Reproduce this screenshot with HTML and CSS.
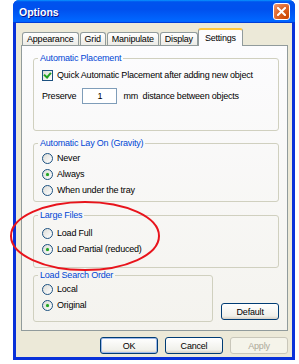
FILE: index.html
```html
<!DOCTYPE html>
<html lang="en">
<head>
    <meta charset="UTF-8">
    <title>Options</title>
    <link rel="stylesheet" href="styles.css">
</head>
<body>
<div class="window">
    <div class="titlebar">
        <span class="title">Options</span>
        <span class="close-button">
            <svg width="9" height="9" viewBox="0 0 9 9"><path d="M1 1 L8 8 M8 1 L1 8" stroke="#fff" stroke-width="2" stroke-linecap="square"/></svg>
        </span>
    </div>
    <div class="client">
        <div class="tabs">
            <div class="tab">Appearance</div>
            <div class="tab">Grid</div>
            <div class="tab">Manipulate</div>
            <div class="tab">Display</div>
            <div class="tab active">Settings</div>
        </div>
        <div class="panel">
            <fieldset class="group group-placement">
                <legend>Automatic Placement</legend>
                <div class="row"><span class="checkbox checked"></span>Quick Automatic Placement after adding new object</div>
                <div class="row preserve">Preserve <span class="field">1</span> mm &nbsp;distance between objects</div>
            </fieldset>
            <fieldset class="group group-gravity">
                <legend>Automatic Lay On (Gravity)</legend>
                <div class="row"><span class="radio"></span>Never</div>
                <div class="row"><span class="radio checked"></span>Always</div>
                <div class="row"><span class="radio"></span>When under the tray</div>
            </fieldset>
            <fieldset class="group group-files">
                <legend>Large Files</legend>
                <div class="row"><span class="radio"></span>Load Full</div>
                <div class="row"><span class="radio checked"></span>Load Partial (reduced)</div>
            </fieldset>
            <div class="last-row">
                <fieldset class="group group-search">
                    <legend>Load Search Order</legend>
                    <div class="row"><span class="radio"></span>Local</div>
                    <div class="row"><span class="radio checked"></span>Original</div>
                </fieldset>
                <button type="button" class="btn">Default</button>
            </div>
        </div>
        <div class="buttons">
            <button type="button" class="btn btn-default">OK</button>
            <button type="button" class="btn">Cancel</button>
            <button type="button" class="btn" disabled>Apply</button>
        </div>
    </div>
</div>
<!-- red marker drawn over the Large Files group -->
<svg class="marker" width="160" height="76" viewBox="0 0 160 76">
    <ellipse cx="80" cy="37" rx="74" ry="34" fill="none" stroke="#e8141c" stroke-width="2"/>
</svg>
</body>
</html>
```

FILE: styles.css
```css
body {
    margin: 0;
    background-color: #ffffff;
    font-family: "Liberation Sans", Arial, sans-serif;
    font-size: 9px;
    letter-spacing: -0.2px;
    color: #000000;
    position: relative;
    width: 299px;
    height: 364px;
    overflow: hidden;
}

.window {
    margin-left: 13px;
    width: 276px;
    height: 357px;
    padding: 0 3px 3px 3px;
    background-color: #0831d9;
    border-radius: 6px 6px 0 0;
    display: flex;
    flex-direction: column;
}

.titlebar {
    height: 23px;
    margin: 0 -3px;
    padding: 0 5px 0 6px;
    border-radius: 6px 6px 0 0;
    background: linear-gradient(#0997ff, #0053ee 8%, #0050ee 40%, #0066ff 88%, #0066ff 93%, #005bff 95%, #003dd7 96%, #003dd7);
    display: flex;
    align-items: center;
    justify-content: space-between;
}

.title {
    color: #ffffff;
    font-family: "Liberation Sans", Arial, sans-serif;
    font-weight: bold;
    font-size: 10.5px;
    letter-spacing: 0;
    text-shadow: 1px 1px #0f1089;
}

.close-button {
    width: 15px;
    height: 15px;
    border: 1px solid #ffffff;
    border-radius: 3px;
    background: radial-gradient(circle at 90% 90%, #cc4600 0%, #dc6527 55%, #f39a76 100%);
    display: flex;
    align-items: center;
    justify-content: center;
}

.client {
    flex: 1;
    background-color: #ece9d8;
    padding: 5px 4px 0 5px;
    display: flex;
    flex-direction: column;
}

.tabs {
    display: flex;
    align-items: flex-end;
    padding-left: 1px;
    height: 17px;
    position: relative;
    z-index: 1;
}

.tab {
    height: 12px;
    line-height: 12px;
    padding: 0 4px;
    border: 1px solid #919b9c;
    border-bottom: none;
    border-radius: 3px 3px 0 0;
    background: linear-gradient(#ffffff, #ecebe6);
    margin-right: 1px;
}

.tab.active {
    height: 16px;
    line-height: 17px;
    border-top: 2px solid #ffc83c;
    background: #fcfcfe;
    margin-bottom: -1px;
    padding: 0 6px;
    margin-left: -1px;
}

.panel {
    box-sizing: border-box;
    height: 286px;
    border: 1px solid #919b9c;
    background: linear-gradient(#fcfcfe, #f4f3ee);
    padding: 7px 8px 0 11px;
    display: flex;
    flex-direction: column;
}

.group {
    box-sizing: border-box;
    margin: 0;
    padding: 0 8px;
    border: 1px solid #d0d0bf;
    border-radius: 3px;
    min-width: 0;
}

.group legend {
    color: #0046d5;
    padding: 0 2px;
    margin-left: -4px;
    line-height: 11px;
}

.row {
    display: flex;
    align-items: center;
    height: 16px;
}

.group-placement {
    height: 78px;
    padding-top: 3px;
}

.group-placement .preserve {
    margin-top: 5px;
}

.group-gravity {
    height: 64px;
    margin-top: 7px;
    padding-top: 1px;
}

.group-files {
    height: 58px;
    margin-top: 8px;
    padding-top: 4px;
}

.last-row {
    display: flex;
    align-items: flex-end;
    margin-top: 2px;
}

.group-search {
    width: 181px;
    height: 52px;
    padding-top: 0;
}

.last-row .btn {
    margin-left: 8px;
    margin-bottom: 2px;
}

.checkbox {
    width: 9px;
    height: 9px;
    border: 1px solid #1c5180;
    background: linear-gradient(135deg, #dcdcd7, #ffffff);
    margin-right: 4px;
    position: relative;
}

.checkbox.checked::after {
    content: "";
    position: absolute;
    left: 2px;
    top: 0;
    width: 3px;
    height: 5px;
    border: solid #21a121;
    border-width: 0 2px 2px 0;
    transform: rotate(40deg);
}

.radio {
    width: 9px;
    height: 9px;
    border: 1px solid #1c5180;
    border-radius: 50%;
    background: linear-gradient(135deg, #dcdcd7, #ffffff);
    margin-right: 4px;
    display: flex;
    align-items: center;
    justify-content: center;
}

.radio.checked::after {
    content: "";
    width: 3px;
    height: 3px;
    border-radius: 50%;
    background: #21a121;
    box-shadow: 0 0 1px #5dd35d;
}

.field {
    display: inline-block;
    width: 33px;
    height: 14px;
    line-height: 14px;
    border: 1px solid #7f9db9;
    background: #ffffff;
    text-align: center;
    margin: 0 6px;
}

.btn {
    width: 58px;
    height: 17px;
    padding: 0;
    font-family: "Liberation Sans", Arial, sans-serif;
    font-size: 9px;
    letter-spacing: -0.2px;
    color: #000000;
    border: 1px solid #003c74;
    border-radius: 3px;
    background: linear-gradient(#ffffff, #f0f0ea 80%, #d6d0c5);
}

.btn-default {
    box-shadow: inset 0 0 0 1px #9db9eb;
}

.btn:disabled {
    color: #aca899;
    border-color: #c9c7ba;
    background: #f5f4ea;
}

.buttons {
    display: flex;
    justify-content: flex-end;
    gap: 7px;
    padding-top: 6px;
}

.marker {
    position: absolute;
    left: 5px;
    top: 199px;
}
```
